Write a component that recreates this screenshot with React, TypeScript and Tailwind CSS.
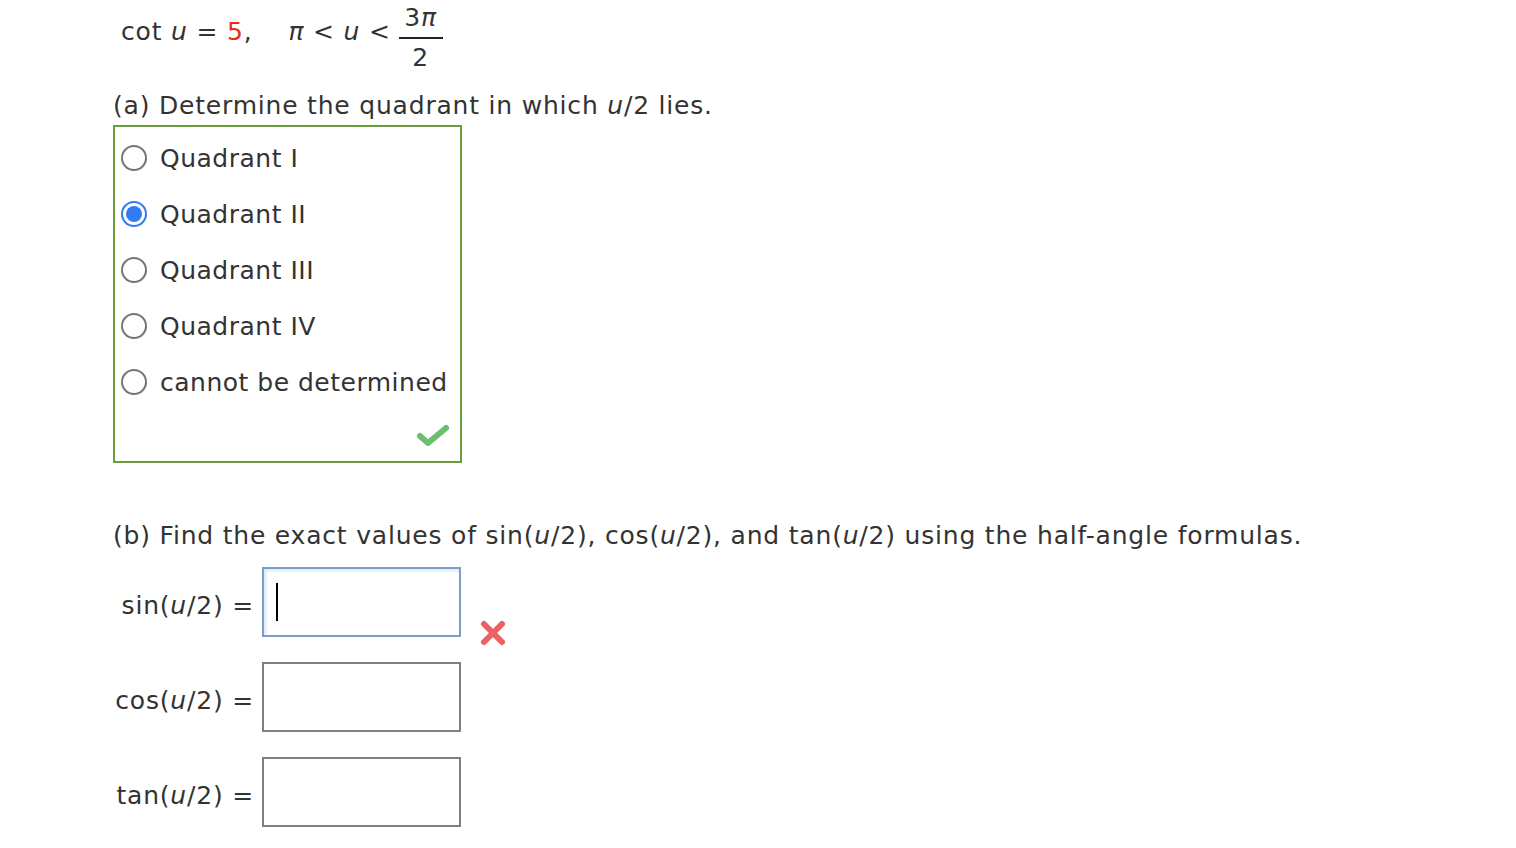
import React from 'react';

const font = { fontFamily: '"DejaVu Sans", Verdana, sans-serif' };

function Radio({ checked }: { checked?: boolean }) {
  if (checked) {
    return (
      <span className="flex h-[26px] w-[26px] shrink-0 items-center justify-center rounded-full border-2 border-[#2f7cf6] bg-white">
        <span className="h-[16px] w-[16px] rounded-full bg-[#2f7cf6]" />
      </span>
    );
  }
  return <span className="h-[26px] w-[26px] shrink-0 rounded-full border-2 border-[#767676] bg-white" />;
}

function CheckMark() {
  return (
    <svg width="34" height="28" viewBox="0 0 34 28">
      <path d="M4 15 L12 22 L30 7" fill="none" stroke="#5cb85c" strokeWidth="6" strokeLinecap="round" strokeLinejoin="round" opacity="0.9" />
    </svg>
  );
}

function CrossMark() {
  return (
    <svg width="28" height="28" viewBox="0 0 28 28">
      <path d="M5 5 L23 23 M23 5 L5 23" stroke="#e8474a" strokeWidth="6" strokeLinecap="round" opacity="0.85" />
    </svg>
  );
}

const options = ['Quadrant I', 'Quadrant II', 'Quadrant III', 'Quadrant IV', 'cannot be determined'];

function U() {
  return <i className="italic">u</i>;
}

export default function App() {
  return (
    <div className="min-h-[848px] bg-white text-[#333] text-[25px] tracking-[0.8px] leading-none" style={font}>
      <div className="pl-[121px] pt-[4px] flex items-center h-[70px]">
        <span className="mb-[12px]">cot <U /> = <span className="text-[#e8291c]">5</span>,</span>
        <span className="ml-[36px] mb-[12px]">
          <i>π</i> &lt; <U /> &lt;
        </span>
        <span className="ml-[8px] inline-flex flex-col items-center">
          <span className="pb-[7px] px-[5px]">3<i>π</i></span>
          <span className="h-[2px] w-[44px] bg-[#222]" />
          <span className="pt-[6px]">2</span>
        </span>
      </div>

      <div className="pl-[113px] pt-[22px] h-[50px] leading-[28px]">(a) Determine the quadrant in which <U />/2 lies.</div>

      <div className="ml-[113px] mt-[5px] w-[349px] h-[338px] border-2 border-[#6b9d3b] flex flex-col">
        <div className="flex flex-col pt-[18px] pl-[6px] gap-[30px]">
          {options.map((o, i) => (
            <div key={o} className="flex items-center h-[26px]">
              <Radio checked={i === 1} />
              <span className="ml-[13px] text-[25px] tracking-[0.5px] whitespace-nowrap">{o}</span>
            </div>
          ))}
        </div>
        <div className="flex justify-end pr-[10px] mt-[26px]">
          <CheckMark />
        </div>
      </div>

      <div className="pl-[113px] pt-[59px] h-[87px] leading-[28px]">(b) Find the exact values of sin(<U />/2), cos(<U />/2), and tan(<U />/2) using the half-angle formulas.</div>

      <div className="mt-[17px] flex flex-col gap-[25px]">
        <div className="flex items-center h-[70px]">
          <span className="w-[262px] pr-[8px] text-right pt-[6px]">sin(<U />/2) =</span>
          <div className="w-[199px] h-[70px] border-2 border-[#7b9dcb] bg-white shadow-[inset_2px_2px_3px_#dce8f7] flex items-center pl-[12px]">
            <span className="w-[2px] h-[38px] bg-black" />
          </div>
          <span className="ml-[18px] self-start mt-[52px]"><CrossMark /></span>
        </div>
        <div className="flex items-center h-[70px]">
          <span className="w-[262px] pr-[8px] text-right pt-[6px]">cos(<U />/2) =</span>
          <div className="w-[199px] h-[70px] border-2 border-[#7f7f7f] bg-white" />
        </div>
        <div className="flex items-center h-[70px]">
          <span className="w-[262px] pr-[8px] text-right pt-[6px]">tan(<U />/2) =</span>
          <div className="w-[199px] h-[70px] border-2 border-[#7f7f7f] bg-white" />
        </div>
      </div>
    </div>
  );
}
